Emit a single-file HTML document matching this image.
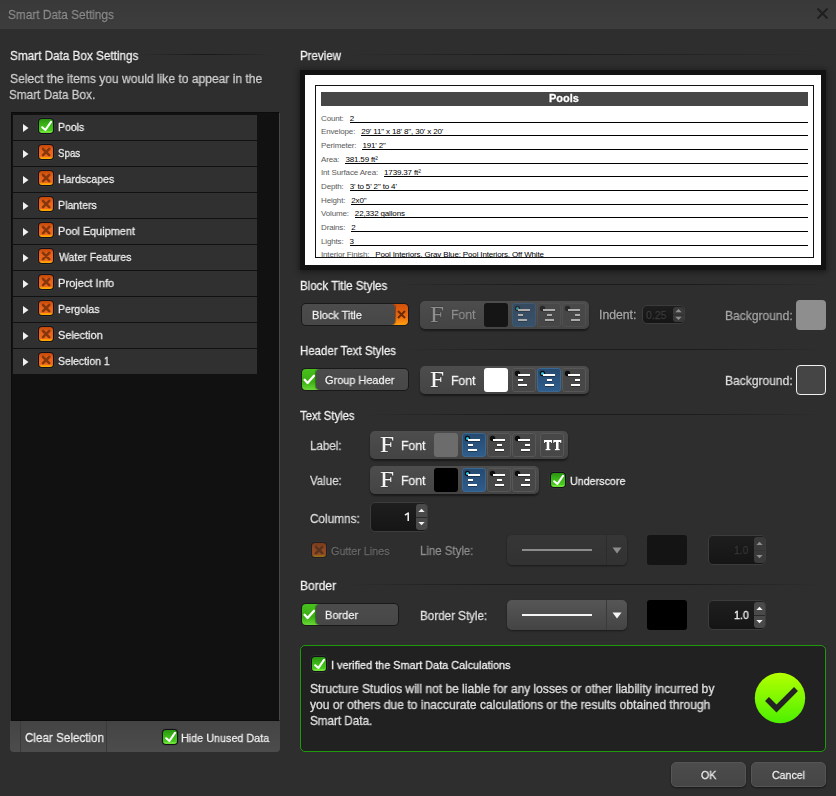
<!DOCTYPE html><html><head><meta charset="utf-8"><style>
html,body{margin:0;padding:0;}
body{width:836px;height:796px;position:relative;overflow:hidden;background:#2e2e2e;font-family:"Liberation Sans",sans-serif;}
.a{position:absolute;box-sizing:border-box;}
.t{position:absolute;white-space:nowrap;line-height:normal;transform-origin:0 0;-webkit-text-stroke:0.3px currentColor;text-shadow:0 0 1.5px rgba(0,0,0,.7);will-change:transform;}
</style></head><body><div class="a" style="left:0px;top:0px;width:836px;height:29px;background:linear-gradient(#393939,#3d3d3d);"></div><div class="t" style="left:8.42px;top:8px;font-size:12.46px;color:#8c8c8c;font-family:'Liberation Sans';font-weight:normal;transform:scaleX(0.9502);">Smart Data Settings</div><svg class="a" style="left:815px;top:6px" width="15" height="15" viewBox="0 0 15 15"><path d="M2.5 2.5 L12.5 12.5 M12.5 2.5 L2.5 12.5" stroke="#1f1f1f" stroke-width="1.9"/></svg><div class="t" style="left:9.54px;top:49px;font-size:12.61px;color:#f2f2f2;font-family:'Liberation Sans';font-weight:normal;transform:scaleX(0.9299);">Smart Data Box Settings</div><div class="a" style="left:141px;top:54px;width:130px;height:1px;background:linear-gradient(90deg,rgba(20,20,20,0),#181818 50%,rgba(20,20,20,0));"></div><div class="t" style="left:9.52px;top:72px;font-size:12.61px;color:#d0d0d0;font-family:'Liberation Sans';font-weight:normal;transform:scaleX(0.957);">Select the items you would like to appear in the</div><div class="t" style="left:9.32px;top:87px;font-size:12.9px;color:#d0d0d0;font-family:'Liberation Sans';font-weight:normal;transform:scaleX(0.9121);">Smart Data Box.</div><div class="a" style="left:11px;top:112px;width:269px;height:609px;background:#111;border:1px solid #0c0c0c;border-right:1px solid #474747;"></div><div class="a" style="left:13px;top:115px;width:244px;height:25px;background:#303030;"></div><svg class="a" style="left:23px;top:124px" width="6" height="8" viewBox="0 0 6 8"><path d="M0 0 L5.5 4 L0 8 Z" fill="#f2f2f2"/></svg><div class="a" style="left:38px;top:118px;width:16px;height:16px;opacity:1;border-radius:4px;background:#141019;box-shadow:0 0 0 1px rgba(60,60,60,.5)"><div class="a" style="left:1px;top:1px;right:1px;bottom:1px;border-radius:3px;background:linear-gradient(#2a9410,#3cb818 45%,#48cc1c 85%,#86f048 92%,#56d424)"></div><svg class="a" style="left:0;top:0" width="16" height="16" viewBox="0 0 16 16"><path d="M4.2 9.3 L7.4 12 L13 3.8" fill="none" stroke="#fff" stroke-width="2.1" stroke-linecap="round" stroke-linejoin="round"/></svg></div><div class="t" style="left:57.8px;top:121px;font-size:11.16px;color:#f0f0f0;font-family:'Liberation Sans';font-weight:normal;transform:scaleX(0.9383);">Pools</div><div class="a" style="left:13px;top:141px;width:244px;height:25px;background:#303030;"></div><svg class="a" style="left:23px;top:150px" width="6" height="8" viewBox="0 0 6 8"><path d="M0 0 L5.5 4 L0 8 Z" fill="#f2f2f2"/></svg><div class="a" style="left:38px;top:144px;width:16px;height:16px;opacity:1;border-radius:4px;background:#141019;box-shadow:0 0 0 1px rgba(60,60,60,.5)"><div class="a" style="left:1px;top:1px;right:1px;bottom:1px;border-radius:3px;background:linear-gradient(#c24806,#e8601a 35%,#f06a1a 84%,#ffb000 92%,#ffa000)"></div><svg class="a" style="left:0;top:0" width="16" height="16" viewBox="0 0 16 16"><path d="M5 5 L11.2 11.2 M11.2 5 L5 11.2" fill="none" stroke="#86380c" stroke-width="2.6" stroke-linecap="round"/></svg></div><div class="t" style="left:58.06px;top:147px;font-size:11.16px;color:#f0f0f0;font-family:'Liberation Sans';font-weight:normal;transform:scaleX(0.8735);">Spas</div><div class="a" style="left:13px;top:167px;width:244px;height:25px;background:#303030;"></div><svg class="a" style="left:23px;top:176px" width="6" height="8" viewBox="0 0 6 8"><path d="M0 0 L5.5 4 L0 8 Z" fill="#f2f2f2"/></svg><div class="a" style="left:38px;top:170px;width:16px;height:16px;opacity:1;border-radius:4px;background:#141019;box-shadow:0 0 0 1px rgba(60,60,60,.5)"><div class="a" style="left:1px;top:1px;right:1px;bottom:1px;border-radius:3px;background:linear-gradient(#c24806,#e8601a 35%,#f06a1a 84%,#ffb000 92%,#ffa000)"></div><svg class="a" style="left:0;top:0" width="16" height="16" viewBox="0 0 16 16"><path d="M5 5 L11.2 11.2 M11.2 5 L5 11.2" fill="none" stroke="#86380c" stroke-width="2.6" stroke-linecap="round"/></svg></div><div class="t" style="left:57.79px;top:173px;font-size:11.16px;color:#f0f0f0;font-family:'Liberation Sans';font-weight:normal;transform:scaleX(0.9436);">Hardscapes</div><div class="a" style="left:13px;top:193px;width:244px;height:25px;background:#303030;"></div><svg class="a" style="left:23px;top:202px" width="6" height="8" viewBox="0 0 6 8"><path d="M0 0 L5.5 4 L0 8 Z" fill="#f2f2f2"/></svg><div class="a" style="left:38px;top:196px;width:16px;height:16px;opacity:1;border-radius:4px;background:#141019;box-shadow:0 0 0 1px rgba(60,60,60,.5)"><div class="a" style="left:1px;top:1px;right:1px;bottom:1px;border-radius:3px;background:linear-gradient(#c24806,#e8601a 35%,#f06a1a 84%,#ffb000 92%,#ffa000)"></div><svg class="a" style="left:0;top:0" width="16" height="16" viewBox="0 0 16 16"><path d="M5 5 L11.2 11.2 M11.2 5 L5 11.2" fill="none" stroke="#86380c" stroke-width="2.6" stroke-linecap="round"/></svg></div><div class="t" style="left:57.79px;top:199px;font-size:11.16px;color:#f0f0f0;font-family:'Liberation Sans';font-weight:normal;transform:scaleX(0.9484);">Planters</div><div class="a" style="left:13px;top:219px;width:244px;height:25px;background:#303030;"></div><svg class="a" style="left:23px;top:228px" width="6" height="8" viewBox="0 0 6 8"><path d="M0 0 L5.5 4 L0 8 Z" fill="#f2f2f2"/></svg><div class="a" style="left:38px;top:222px;width:16px;height:16px;opacity:1;border-radius:4px;background:#141019;box-shadow:0 0 0 1px rgba(60,60,60,.5)"><div class="a" style="left:1px;top:1px;right:1px;bottom:1px;border-radius:3px;background:linear-gradient(#c24806,#e8601a 35%,#f06a1a 84%,#ffb000 92%,#ffa000)"></div><svg class="a" style="left:0;top:0" width="16" height="16" viewBox="0 0 16 16"><path d="M5 5 L11.2 11.2 M11.2 5 L5 11.2" fill="none" stroke="#86380c" stroke-width="2.6" stroke-linecap="round"/></svg></div><div class="t" style="left:57.77px;top:225px;font-size:11.16px;color:#f0f0f0;font-family:'Liberation Sans';font-weight:normal;transform:scaleX(0.9769);">Pool Equipment</div><div class="a" style="left:13px;top:245px;width:244px;height:25px;background:#303030;"></div><svg class="a" style="left:23px;top:254px" width="6" height="8" viewBox="0 0 6 8"><path d="M0 0 L5.5 4 L0 8 Z" fill="#f2f2f2"/></svg><div class="a" style="left:38px;top:248px;width:16px;height:16px;opacity:1;border-radius:4px;background:#141019;box-shadow:0 0 0 1px rgba(60,60,60,.5)"><div class="a" style="left:1px;top:1px;right:1px;bottom:1px;border-radius:3px;background:linear-gradient(#c24806,#e8601a 35%,#f06a1a 84%,#ffb000 92%,#ffa000)"></div><svg class="a" style="left:0;top:0" width="16" height="16" viewBox="0 0 16 16"><path d="M5 5 L11.2 11.2 M11.2 5 L5 11.2" fill="none" stroke="#86380c" stroke-width="2.6" stroke-linecap="round"/></svg></div><div class="t" style="left:58.5px;top:251px;font-size:11.16px;color:#f0f0f0;font-family:'Liberation Sans';font-weight:normal;transform:scaleX(0.9461);">Water Features</div><div class="a" style="left:13px;top:271px;width:244px;height:25px;background:#303030;"></div><svg class="a" style="left:23px;top:280px" width="6" height="8" viewBox="0 0 6 8"><path d="M0 0 L5.5 4 L0 8 Z" fill="#f2f2f2"/></svg><div class="a" style="left:38px;top:274px;width:16px;height:16px;opacity:1;border-radius:4px;background:#141019;box-shadow:0 0 0 1px rgba(60,60,60,.5)"><div class="a" style="left:1px;top:1px;right:1px;bottom:1px;border-radius:3px;background:linear-gradient(#c24806,#e8601a 35%,#f06a1a 84%,#ffb000 92%,#ffa000)"></div><svg class="a" style="left:0;top:0" width="16" height="16" viewBox="0 0 16 16"><path d="M5 5 L11.2 11.2 M11.2 5 L5 11.2" fill="none" stroke="#86380c" stroke-width="2.6" stroke-linecap="round"/></svg></div><div class="t" style="left:57.75px;top:277px;font-size:11.16px;color:#f0f0f0;font-family:'Liberation Sans';font-weight:normal;transform:scaleX(0.9937);">Project Info</div><div class="a" style="left:13px;top:297px;width:244px;height:25px;background:#303030;"></div><svg class="a" style="left:23px;top:306px" width="6" height="8" viewBox="0 0 6 8"><path d="M0 0 L5.5 4 L0 8 Z" fill="#f2f2f2"/></svg><div class="a" style="left:38px;top:300px;width:16px;height:16px;opacity:1;border-radius:4px;background:#141019;box-shadow:0 0 0 1px rgba(60,60,60,.5)"><div class="a" style="left:1px;top:1px;right:1px;bottom:1px;border-radius:3px;background:linear-gradient(#c24806,#e8601a 35%,#f06a1a 84%,#ffb000 92%,#ffa000)"></div><svg class="a" style="left:0;top:0" width="16" height="16" viewBox="0 0 16 16"><path d="M5 5 L11.2 11.2 M11.2 5 L5 11.2" fill="none" stroke="#86380c" stroke-width="2.6" stroke-linecap="round"/></svg></div><div class="t" style="left:57.79px;top:303px;font-size:11.16px;color:#f0f0f0;font-family:'Liberation Sans';font-weight:normal;transform:scaleX(0.9419);">Pergolas</div><div class="a" style="left:13px;top:323px;width:244px;height:25px;background:#303030;"></div><svg class="a" style="left:23px;top:332px" width="6" height="8" viewBox="0 0 6 8"><path d="M0 0 L5.5 4 L0 8 Z" fill="#f2f2f2"/></svg><div class="a" style="left:38px;top:326px;width:16px;height:16px;opacity:1;border-radius:4px;background:#141019;box-shadow:0 0 0 1px rgba(60,60,60,.5)"><div class="a" style="left:1px;top:1px;right:1px;bottom:1px;border-radius:3px;background:linear-gradient(#c24806,#e8601a 35%,#f06a1a 84%,#ffb000 92%,#ffa000)"></div><svg class="a" style="left:0;top:0" width="16" height="16" viewBox="0 0 16 16"><path d="M5 5 L11.2 11.2 M11.2 5 L5 11.2" fill="none" stroke="#86380c" stroke-width="2.6" stroke-linecap="round"/></svg></div><div class="t" style="left:58.01px;top:329px;font-size:11.16px;color:#f0f0f0;font-family:'Liberation Sans';font-weight:normal;transform:scaleX(0.9721);">Selection</div><div class="a" style="left:13px;top:349px;width:244px;height:25px;background:#303030;"></div><svg class="a" style="left:23px;top:358px" width="6" height="8" viewBox="0 0 6 8"><path d="M0 0 L5.5 4 L0 8 Z" fill="#f2f2f2"/></svg><div class="a" style="left:38px;top:352px;width:16px;height:16px;opacity:1;border-radius:4px;background:#141019;box-shadow:0 0 0 1px rgba(60,60,60,.5)"><div class="a" style="left:1px;top:1px;right:1px;bottom:1px;border-radius:3px;background:linear-gradient(#c24806,#e8601a 35%,#f06a1a 84%,#ffb000 92%,#ffa000)"></div><svg class="a" style="left:0;top:0" width="16" height="16" viewBox="0 0 16 16"><path d="M5 5 L11.2 11.2 M11.2 5 L5 11.2" fill="none" stroke="#86380c" stroke-width="2.6" stroke-linecap="round"/></svg></div><div class="t" style="left:58.03px;top:355px;font-size:11.16px;color:#f0f0f0;font-family:'Liberation Sans';font-weight:normal;transform:scaleX(0.9364);">Selection 1</div><div class="a" style="left:10px;top:721px;width:270px;height:31px;background:linear-gradient(#444,#4c4c4c);border-radius:0 0 4px 4px;"></div><div class="a" style="left:20px;top:721px;width:1px;height:31px;background:#3a3a3a;"></div><div class="a" style="left:106px;top:721px;width:1px;height:31px;background:#3a3a3a;"></div><div class="t" style="left:24.73px;top:731px;font-size:12.46px;color:#f0f0f0;font-family:'Liberation Sans';font-weight:normal;transform:scaleX(0.9357);">Clear Selection</div><div class="a" style="left:162px;top:729px;width:16px;height:16px;opacity:1;border-radius:4px;background:#141019;box-shadow:0 0 0 1px rgba(60,60,60,.5)"><div class="a" style="left:1px;top:1px;right:1px;bottom:1px;border-radius:3px;background:linear-gradient(#2a9410,#3cb818 45%,#48cc1c 85%,#86f048 92%,#56d424)"></div><svg class="a" style="left:0;top:0" width="16" height="16" viewBox="0 0 16 16"><path d="M4.2 9.3 L7.4 12 L13 3.8" fill="none" stroke="#fff" stroke-width="2.1" stroke-linecap="round" stroke-linejoin="round"/></svg></div><div class="t" style="left:181.24px;top:732px;font-size:11.23px;color:#f0f0f0;font-family:'Liberation Sans';font-weight:normal;transform:scaleX(0.962);">Hide Unused Data</div><div class="t" style="left:299.85px;top:49px;font-size:12.1px;color:#f2f2f2;font-family:'Liberation Sans';font-weight:normal;transform:scaleX(0.9548);">Preview</div><div class="a" style="left:345px;top:54px;width:480px;height:1px;background:linear-gradient(90deg,rgba(20,20,20,0),#1a1a1a 40%,rgba(20,20,20,0));"></div><div class="a" style="left:300px;top:70px;width:526px;height:200px;background:#121212;box-shadow:0 1px 6px 1px rgba(0,0,0,.45);"></div><div class="a" style="left:305px;top:75px;width:516px;height:190px;background:#fff;"></div><div class="a" style="left:315px;top:85px;width:499px;height:173px;border:1.5px solid #111;"></div><div class="a" style="left:321px;top:92px;width:487px;height:14px;background:#464646;"></div><div class="t" style="left:464px;width:200px;text-align:center;top:91.5px;font-size:11px;line-height:normal;color:#fff;font-weight:bold;">Pools</div><div class="a" style="left:316px;top:107px;width:497px;height:150px;overflow:hidden"><div class="a" style="left:5px;top:6.64px;width:487px;height:12px;display:flex;font-size:8px;line-height:normal;white-space:nowrap"><span style="color:#5a5a5a;letter-spacing:-0.15px;margin-right:6px">Count:</span><span style="color:#000;flex:1;letter-spacing:-0.15px;position:relative">2<i style="position:absolute;left:0;right:0;top:8.36px;height:1px;background:#000"></i></span></div><div class="a" style="left:5px;top:20.31px;width:487px;height:12px;display:flex;font-size:8px;line-height:normal;white-space:nowrap"><span style="color:#5a5a5a;letter-spacing:-0.15px;margin-right:6px">Envelope:</span><span style="color:#000;flex:1;letter-spacing:-0.15px;position:relative">29' 11" x 18' 8", 30' x 20'<i style="position:absolute;left:0;right:0;top:7.69px;height:1px;background:#000"></i></span></div><div class="a" style="left:5px;top:33.98px;width:487px;height:12px;display:flex;font-size:8px;line-height:normal;white-space:nowrap"><span style="color:#5a5a5a;letter-spacing:-0.15px;margin-right:6px">Perimeter:</span><span style="color:#000;flex:1;letter-spacing:-0.15px;position:relative">191' 2"<i style="position:absolute;left:0;right:0;top:8.02px;height:1px;background:#000"></i></span></div><div class="a" style="left:5px;top:47.65px;width:487px;height:12px;display:flex;font-size:8px;line-height:normal;white-space:nowrap"><span style="color:#5a5a5a;letter-spacing:-0.15px;margin-right:6px">Area:</span><span style="color:#000;flex:1;letter-spacing:-0.15px;position:relative">381.59 ft²<i style="position:absolute;left:0;right:0;top:8.35px;height:1px;background:#000"></i></span></div><div class="a" style="left:5px;top:61.32px;width:487px;height:12px;display:flex;font-size:8px;line-height:normal;white-space:nowrap"><span style="color:#5a5a5a;letter-spacing:-0.15px;margin-right:6px">Int Surface Area:</span><span style="color:#000;flex:1;letter-spacing:-0.15px;position:relative">1739.37 ft²<i style="position:absolute;left:0;right:0;top:7.68px;height:1px;background:#000"></i></span></div><div class="a" style="left:5px;top:74.99px;width:487px;height:12px;display:flex;font-size:8px;line-height:normal;white-space:nowrap"><span style="color:#5a5a5a;letter-spacing:-0.15px;margin-right:6px">Depth:</span><span style="color:#000;flex:1;letter-spacing:-0.15px;position:relative">3' to 5' 2" to 4'<i style="position:absolute;left:0;right:0;top:8.01px;height:1px;background:#000"></i></span></div><div class="a" style="left:5px;top:88.66px;width:487px;height:12px;display:flex;font-size:8px;line-height:normal;white-space:nowrap"><span style="color:#5a5a5a;letter-spacing:-0.15px;margin-right:6px">Height:</span><span style="color:#000;flex:1;letter-spacing:-0.15px;position:relative">2x0"<i style="position:absolute;left:0;right:0;top:8.34px;height:1px;background:#000"></i></span></div><div class="a" style="left:5px;top:102.33px;width:487px;height:12px;display:flex;font-size:8px;line-height:normal;white-space:nowrap"><span style="color:#5a5a5a;letter-spacing:-0.15px;margin-right:6px">Volume:</span><span style="color:#000;flex:1;letter-spacing:-0.15px;position:relative">22,332 gallons<i style="position:absolute;left:0;right:0;top:7.67px;height:1px;background:#000"></i></span></div><div class="a" style="left:5px;top:116.00px;width:487px;height:12px;display:flex;font-size:8px;line-height:normal;white-space:nowrap"><span style="color:#5a5a5a;letter-spacing:-0.15px;margin-right:6px">Drains:</span><span style="color:#000;flex:1;letter-spacing:-0.15px;position:relative">2<i style="position:absolute;left:0;right:0;top:8.00px;height:1px;background:#000"></i></span></div><div class="a" style="left:5px;top:129.67px;width:487px;height:12px;display:flex;font-size:8px;line-height:normal;white-space:nowrap"><span style="color:#5a5a5a;letter-spacing:-0.15px;margin-right:6px">Lights:</span><span style="color:#000;flex:1;letter-spacing:-0.15px;position:relative">3<i style="position:absolute;left:0;right:0;top:8.33px;height:1px;background:#000"></i></span></div><div class="a" style="left:5px;top:143.34px;width:487px;height:12px;display:flex;font-size:8px;line-height:normal;white-space:nowrap"><span style="color:#5a5a5a;letter-spacing:-0.15px;margin-right:6px">Interior Finish:</span><span style="color:#000;flex:1;letter-spacing:-0.15px;position:relative">Pool Interiors, Gray Blue; Pool Interiors, Off White<i style="position:absolute;left:0;right:0;top:7.66px;height:1px;background:#000"></i></span></div></div><div class="t" style="left:300.04px;top:279px;font-size:12.03px;color:#f2f2f2;font-family:'Liberation Sans';font-weight:normal;transform:scaleX(0.9609);">Block Title Styles</div><div class="a" style="left:395px;top:284px;width:431px;height:1px;background:linear-gradient(90deg,rgba(24,24,24,0),#1c1c1c 30%,#1c1c1c 70%,rgba(24,24,24,0));"></div><div class="t" style="left:300.05px;top:344px;font-size:12.03px;color:#f2f2f2;font-family:'Liberation Sans';font-weight:normal;transform:scaleX(0.9542);">Header Text Styles</div><div class="a" style="left:402px;top:349px;width:424px;height:1px;background:linear-gradient(90deg,rgba(24,24,24,0),#1c1c1c 30%,#1c1c1c 70%,rgba(24,24,24,0));"></div><div class="t" style="left:300.07px;top:409px;font-size:12.25px;color:#f2f2f2;font-family:'Liberation Sans';font-weight:normal;transform:scaleX(0.9214);">Text Styles</div><div class="a" style="left:360px;top:414px;width:466px;height:1px;background:linear-gradient(90deg,rgba(24,24,24,0),#1c1c1c 30%,#1c1c1c 70%,rgba(24,24,24,0));"></div><div class="t" style="left:299.94px;top:579px;font-size:12.49px;color:#f2f2f2;font-family:'Liberation Sans';font-weight:normal;transform:scaleX(0.9628);">Border</div><div class="a" style="left:345px;top:584px;width:481px;height:1px;background:linear-gradient(90deg,rgba(24,24,24,0),#1c1c1c 30%,#1c1c1c 70%,rgba(24,24,24,0));"></div><div class="a" style="left:301px;top:303px;width:108px;height:23px;border-radius:5px;background:#1a1a1a;"></div><div class="a" style="left:388px;top:304px;width:20px;height:21px;border-radius:0 4px 4px 0;background:linear-gradient(#cf520c,#ee6a10 60%,#ffa010);"></div><svg class="a" style="left:397px;top:310px" width="9" height="9" viewBox="0 0 9 9"><path d="M1 1 L8 8 M8 1 L1 8" stroke="#6a2c08" stroke-width="2"/></svg><div class="a" style="left:302px;top:304px;width:93px;height:21px;border-radius:4px;background:linear-gradient(#4c4c4c,#474747);box-shadow:1px 0 1px rgba(0,0,0,.35);"></div><div class="t" style="left:311.69px;top:309px;font-size:11.2px;color:#f2f2f2;font-family:'Liberation Sans';font-weight:normal;transform:scaleX(0.9784);">Block Title</div><div class="a" style="left:420px;top:301px;width:169px;height:28px;border-radius:5px;background:linear-gradient(#4d4d4d,#444);box-shadow:0 2px 2px rgba(0,0,0,.45);"></div><div class="t" style="left:430.21px;top:301px;font-size:23.82px;color:#8e8e8e;font-family:'Liberation Serif';font-weight:normal;transform:scaleX(1.0553);-webkit-text-stroke:0.1px currentColor;">F</div><div class="t" style="left:450.74px;top:307px;font-size:12.75px;color:#8e8e8e;font-family:'Liberation Sans';font-weight:normal;transform:scaleX(0.9551);">Font</div><div class="a" style="left:484px;top:303px;width:24px;height:24px;border-radius:3px;background:#151515;"></div><div class="a" style="left:0;top:0;width:836px;height:796px;opacity:.55;"><div class="a" style="left:512px;top:303px;width:24px;height:24px;border-radius:3px;background:linear-gradient(#254a70,#2f5d8c);border:1px solid #3a6894;"></div><div class="a" style="left:515.5px;top:306.5px;width:3px;height:3px;border-radius:50%;background:#22c8e8;box-shadow:0 0 0 1.2px #0c0c0c;"></div><div class="a" style="left:518px;top:309px;width:12px;height:2px;background:#ffffff;box-shadow:0 1px 0 rgba(0,0,0,.35);"></div><div class="a" style="left:518px;top:314px;width:5px;height:2px;background:#ffffff;box-shadow:0 1px 0 rgba(0,0,0,.35);"></div><div class="a" style="left:518px;top:319px;width:9px;height:2px;background:#ffffff;box-shadow:0 1px 0 rgba(0,0,0,.35);"></div><div class="a" style="left:537px;top:303px;width:24px;height:24px;border-radius:3px;background:#474747;border:1px solid #585858;"></div><div class="a" style="left:540.5px;top:306.5px;width:3px;height:3px;border-radius:50%;background:#101010;box-shadow:0 0 0 1.2px #0c0c0c;"></div><div class="a" style="left:543px;top:309px;width:12px;height:2px;background:#ffffff;box-shadow:0 1px 0 rgba(0,0,0,.35);"></div><div class="a" style="left:547px;top:314px;width:5px;height:2px;background:#ffffff;box-shadow:0 1px 0 rgba(0,0,0,.35);"></div><div class="a" style="left:545px;top:319px;width:9px;height:2px;background:#ffffff;box-shadow:0 1px 0 rgba(0,0,0,.35);"></div><div class="a" style="left:562px;top:303px;width:24px;height:24px;border-radius:3px;background:#474747;border:1px solid #585858;"></div><div class="a" style="left:565.5px;top:306.5px;width:3px;height:3px;border-radius:50%;background:#101010;box-shadow:0 0 0 1.2px #0c0c0c;"></div><div class="a" style="left:568px;top:309px;width:12px;height:2px;background:#ffffff;box-shadow:0 1px 0 rgba(0,0,0,.35);"></div><div class="a" style="left:575px;top:314px;width:5px;height:2px;background:#ffffff;box-shadow:0 1px 0 rgba(0,0,0,.35);"></div><div class="a" style="left:571px;top:319px;width:9px;height:2px;background:#ffffff;box-shadow:0 1px 0 rgba(0,0,0,.35);"></div></div><div class="t" style="left:598.79px;top:308px;font-size:12.17px;color:#a6a6a6;font-family:'Liberation Sans';font-weight:normal;transform:scaleX(1.0057);">Indent:</div><div class="a" style="left:642px;top:305px;width:43px;height:19px;border-radius:5px;background:linear-gradient(#1e1e1e,#151515);border:1px solid #3c3c3c;"></div><div class="a" style="left:673px;top:307px;width:11px;height:15px;border-radius:3px;background:#3a3a3a;"></div><div class="a" style="left:673px;top:314.0px;width:11px;height:1.5px;background:#343434;"></div><svg class="a" style="left:673px;top:305px" width="11" height="19" viewBox="0 0 11 19"><path d="M2.3 7.35 L5.5 3.95 L8.7 7.35 Z" fill="#8e8e8e"/><path d="M2.3 11.65 L5.5 15.05 L8.7 11.65 Z" fill="#8e8e8e"/></svg><div class="t" style="left:646.21px;top:309px;font-size:10.72px;color:#3c3c3c;font-family:'Liberation Sans';font-weight:normal;transform:scaleX(0.975);">0.25</div><div class="t" style="left:724.77px;top:309px;font-size:12.46px;color:#a6a6a6;font-family:'Liberation Sans';font-weight:normal;transform:scaleX(0.9677);">Background:</div><div class="a" style="left:796px;top:300px;width:30px;height:30px;border-radius:4px;background:#8e8e8e;"></div><div class="a" style="left:301px;top:368px;width:108px;height:23px;border-radius:5px;background:#1a1a1a;"></div><div class="a" style="left:302px;top:369px;width:20px;height:21px;border-radius:4px 0 0 4px;background:linear-gradient(#49c01f,#3aae12 60%,#6ad838);"></div><svg class="a" style="left:303px;top:374px" width="13" height="11" viewBox="0 0 13 11"><path d="M1.6 5.8 L4.6 9 L11 1.8" fill="none" stroke="#fff" stroke-width="2.3" stroke-linecap="round" stroke-linejoin="round"/></svg><div class="a" style="left:316px;top:369px;width:92px;height:21px;border-radius:4px;background:linear-gradient(#4c4c4c,#474747);box-shadow:-1px 0 1px rgba(0,0,0,.35);"></div><div class="t" style="left:324.51px;top:374px;font-size:11.16px;color:#f2f2f2;font-family:'Liberation Sans';font-weight:normal;transform:scaleX(0.9814);">Group Header</div><div class="a" style="left:420px;top:366px;width:169px;height:28px;border-radius:5px;background:linear-gradient(#4d4d4d,#444);box-shadow:0 2px 2px rgba(0,0,0,.45);"></div><div class="t" style="left:430.21px;top:366px;font-size:23.82px;color:#f4f4f4;font-family:'Liberation Serif';font-weight:normal;transform:scaleX(1.0553);-webkit-text-stroke:0.1px currentColor;">F</div><div class="t" style="left:450.74px;top:373px;font-size:12.75px;color:#f4f4f4;font-family:'Liberation Sans';font-weight:normal;transform:scaleX(0.9551);">Font</div><div class="a" style="left:484px;top:368px;width:24px;height:24px;border-radius:3px;background:#ffffff;"></div><div class="a" style="left:0;top:0;width:836px;height:796px;"><div class="a" style="left:512px;top:368px;width:24px;height:24px;border-radius:3px;background:#474747;border:1px solid #585858;"></div><div class="a" style="left:515.5px;top:371.5px;width:3px;height:3px;border-radius:50%;background:#101010;box-shadow:0 0 0 1.2px #0c0c0c;"></div><div class="a" style="left:518px;top:374px;width:12px;height:2px;background:#ffffff;box-shadow:0 1px 0 rgba(0,0,0,.35);"></div><div class="a" style="left:518px;top:379px;width:5px;height:2px;background:#ffffff;box-shadow:0 1px 0 rgba(0,0,0,.35);"></div><div class="a" style="left:518px;top:384px;width:9px;height:2px;background:#ffffff;box-shadow:0 1px 0 rgba(0,0,0,.35);"></div><div class="a" style="left:537px;top:368px;width:24px;height:24px;border-radius:3px;background:linear-gradient(#254a70,#2f5d8c);border:1px solid #3a6894;"></div><div class="a" style="left:540.5px;top:371.5px;width:3px;height:3px;border-radius:50%;background:#22c8e8;box-shadow:0 0 0 1.2px #0c0c0c;"></div><div class="a" style="left:543px;top:374px;width:12px;height:2px;background:#ffffff;box-shadow:0 1px 0 rgba(0,0,0,.35);"></div><div class="a" style="left:547px;top:379px;width:5px;height:2px;background:#ffffff;box-shadow:0 1px 0 rgba(0,0,0,.35);"></div><div class="a" style="left:545px;top:384px;width:9px;height:2px;background:#ffffff;box-shadow:0 1px 0 rgba(0,0,0,.35);"></div><div class="a" style="left:562px;top:368px;width:24px;height:24px;border-radius:3px;background:#474747;border:1px solid #585858;"></div><div class="a" style="left:565.5px;top:371.5px;width:3px;height:3px;border-radius:50%;background:#101010;box-shadow:0 0 0 1.2px #0c0c0c;"></div><div class="a" style="left:568px;top:374px;width:12px;height:2px;background:#ffffff;box-shadow:0 1px 0 rgba(0,0,0,.35);"></div><div class="a" style="left:575px;top:379px;width:5px;height:2px;background:#ffffff;box-shadow:0 1px 0 rgba(0,0,0,.35);"></div><div class="a" style="left:571px;top:384px;width:9px;height:2px;background:#ffffff;box-shadow:0 1px 0 rgba(0,0,0,.35);"></div></div><div class="t" style="left:724.77px;top:374px;font-size:12.46px;color:#dedede;font-family:'Liberation Sans';font-weight:normal;transform:scaleX(0.9677);">Background:</div><div class="a" style="left:796px;top:365px;width:30px;height:30px;border-radius:4px;background:#454545;border:1px solid #f0f0f0;"></div><div class="t" style="left:309.73px;top:439px;font-size:12.61px;color:#dcdcdc;font-family:'Liberation Sans';font-weight:normal;transform:scaleX(0.9194);">Label:</div><div class="a" style="left:370px;top:431px;width:198px;height:28px;border-radius:5px;background:linear-gradient(#4d4d4d,#444);box-shadow:0 2px 2px rgba(0,0,0,.45);"></div><div class="t" style="left:380.21px;top:431px;font-size:23.82px;color:#f4f4f4;font-family:'Liberation Serif';font-weight:normal;transform:scaleX(1.0553);-webkit-text-stroke:0.1px currentColor;">F</div><div class="t" style="left:400.74px;top:438px;font-size:12.75px;color:#f4f4f4;font-family:'Liberation Sans';font-weight:normal;transform:scaleX(0.9551);">Font</div><div class="a" style="left:434px;top:433px;width:24px;height:24px;border-radius:3px;background:#6c6c6c;"></div><div class="a" style="left:0;top:0;width:836px;height:796px;"><div class="a" style="left:462px;top:433px;width:24px;height:24px;border-radius:3px;background:linear-gradient(#254a70,#2f5d8c);border:1px solid #3a6894;"></div><div class="a" style="left:465.5px;top:436.5px;width:3px;height:3px;border-radius:50%;background:#22c8e8;box-shadow:0 0 0 1.2px #0c0c0c;"></div><div class="a" style="left:468px;top:439px;width:12px;height:2px;background:#ffffff;box-shadow:0 1px 0 rgba(0,0,0,.35);"></div><div class="a" style="left:468px;top:444px;width:5px;height:2px;background:#ffffff;box-shadow:0 1px 0 rgba(0,0,0,.35);"></div><div class="a" style="left:468px;top:449px;width:9px;height:2px;background:#ffffff;box-shadow:0 1px 0 rgba(0,0,0,.35);"></div><div class="a" style="left:487px;top:433px;width:24px;height:24px;border-radius:3px;background:#474747;border:1px solid #585858;"></div><div class="a" style="left:490.5px;top:436.5px;width:3px;height:3px;border-radius:50%;background:#101010;box-shadow:0 0 0 1.2px #0c0c0c;"></div><div class="a" style="left:493px;top:439px;width:12px;height:2px;background:#ffffff;box-shadow:0 1px 0 rgba(0,0,0,.35);"></div><div class="a" style="left:497px;top:444px;width:5px;height:2px;background:#ffffff;box-shadow:0 1px 0 rgba(0,0,0,.35);"></div><div class="a" style="left:495px;top:449px;width:9px;height:2px;background:#ffffff;box-shadow:0 1px 0 rgba(0,0,0,.35);"></div><div class="a" style="left:512px;top:433px;width:24px;height:24px;border-radius:3px;background:#474747;border:1px solid #585858;"></div><div class="a" style="left:515.5px;top:436.5px;width:3px;height:3px;border-radius:50%;background:#101010;box-shadow:0 0 0 1.2px #0c0c0c;"></div><div class="a" style="left:518px;top:439px;width:12px;height:2px;background:#ffffff;box-shadow:0 1px 0 rgba(0,0,0,.35);"></div><div class="a" style="left:525px;top:444px;width:5px;height:2px;background:#ffffff;box-shadow:0 1px 0 rgba(0,0,0,.35);"></div><div class="a" style="left:521px;top:449px;width:9px;height:2px;background:#ffffff;box-shadow:0 1px 0 rgba(0,0,0,.35);"></div></div><div class="a" style="left:540px;top:433px;width:24px;height:24px;border-radius:3px;background:#474747;border:1px solid #585858;"></div><svg class="a" style="left:543.5px;top:439.5px" width="20" height="12" viewBox="0 0 20 12"><g fill="#000" opacity=".35" transform="translate(0.3,0.6)"><path d="M0 0 H8 V3 H7.3 L6.7 2 H5.3 V9.1 H6.4 V10.2 H1.6 V9.1 H2.7 V2 H1.3 L0.7 3 H0 Z"/><path transform="translate(9.3,0)" d="M0 0 H8 V3 H7.3 L6.7 2 H5.3 V9.1 H6.4 V10.2 H1.6 V9.1 H2.7 V2 H1.3 L0.7 3 H0 Z"/></g><g fill="#fff"><path d="M0 0 H8 V3 H7.3 L6.7 2 H5.3 V9.1 H6.4 V10.2 H1.6 V9.1 H2.7 V2 H1.3 L0.7 3 H0 Z"/><path transform="translate(9.3,0)" d="M0 0 H8 V3 H7.3 L6.7 2 H5.3 V9.1 H6.4 V10.2 H1.6 V9.1 H2.7 V2 H1.3 L0.7 3 H0 Z"/></g></svg><div class="t" style="left:310.4px;top:474px;font-size:12.03px;color:#dcdcdc;font-family:'Liberation Sans';font-weight:normal;transform:scaleX(0.955);">Value:</div><div class="a" style="left:370px;top:466px;width:169px;height:28px;border-radius:5px;background:linear-gradient(#4d4d4d,#444);box-shadow:0 2px 2px rgba(0,0,0,.45);"></div><div class="t" style="left:380.21px;top:466px;font-size:23.82px;color:#f4f4f4;font-family:'Liberation Serif';font-weight:normal;transform:scaleX(1.0553);-webkit-text-stroke:0.1px currentColor;">F</div><div class="t" style="left:400.74px;top:473px;font-size:12.75px;color:#f4f4f4;font-family:'Liberation Sans';font-weight:normal;transform:scaleX(0.9551);">Font</div><div class="a" style="left:434px;top:468px;width:24px;height:24px;border-radius:3px;background:#000000;"></div><div class="a" style="left:0;top:0;width:836px;height:796px;"><div class="a" style="left:462px;top:468px;width:24px;height:24px;border-radius:3px;background:linear-gradient(#254a70,#2f5d8c);border:1px solid #3a6894;"></div><div class="a" style="left:465.5px;top:471.5px;width:3px;height:3px;border-radius:50%;background:#22c8e8;box-shadow:0 0 0 1.2px #0c0c0c;"></div><div class="a" style="left:468px;top:474px;width:12px;height:2px;background:#ffffff;box-shadow:0 1px 0 rgba(0,0,0,.35);"></div><div class="a" style="left:468px;top:479px;width:5px;height:2px;background:#ffffff;box-shadow:0 1px 0 rgba(0,0,0,.35);"></div><div class="a" style="left:468px;top:484px;width:9px;height:2px;background:#ffffff;box-shadow:0 1px 0 rgba(0,0,0,.35);"></div><div class="a" style="left:487px;top:468px;width:24px;height:24px;border-radius:3px;background:#474747;border:1px solid #585858;"></div><div class="a" style="left:490.5px;top:471.5px;width:3px;height:3px;border-radius:50%;background:#101010;box-shadow:0 0 0 1.2px #0c0c0c;"></div><div class="a" style="left:493px;top:474px;width:12px;height:2px;background:#ffffff;box-shadow:0 1px 0 rgba(0,0,0,.35);"></div><div class="a" style="left:497px;top:479px;width:5px;height:2px;background:#ffffff;box-shadow:0 1px 0 rgba(0,0,0,.35);"></div><div class="a" style="left:495px;top:484px;width:9px;height:2px;background:#ffffff;box-shadow:0 1px 0 rgba(0,0,0,.35);"></div><div class="a" style="left:512px;top:468px;width:24px;height:24px;border-radius:3px;background:#474747;border:1px solid #585858;"></div><div class="a" style="left:515.5px;top:471.5px;width:3px;height:3px;border-radius:50%;background:#101010;box-shadow:0 0 0 1.2px #0c0c0c;"></div><div class="a" style="left:518px;top:474px;width:12px;height:2px;background:#ffffff;box-shadow:0 1px 0 rgba(0,0,0,.35);"></div><div class="a" style="left:525px;top:479px;width:5px;height:2px;background:#ffffff;box-shadow:0 1px 0 rgba(0,0,0,.35);"></div><div class="a" style="left:521px;top:484px;width:9px;height:2px;background:#ffffff;box-shadow:0 1px 0 rgba(0,0,0,.35);"></div></div><div class="a" style="left:550px;top:472px;width:16px;height:16px;opacity:1;border-radius:4px;background:#141019;box-shadow:0 0 0 1px rgba(60,60,60,.5)"><div class="a" style="left:1px;top:1px;right:1px;bottom:1px;border-radius:3px;background:linear-gradient(#2a9410,#3cb818 45%,#48cc1c 85%,#86f048 92%,#56d424)"></div><svg class="a" style="left:0;top:0" width="16" height="16" viewBox="0 0 16 16"><path d="M4.2 9.3 L7.4 12 L13 3.8" fill="none" stroke="#fff" stroke-width="2.1" stroke-linecap="round" stroke-linejoin="round"/></svg></div><div class="t" style="left:570.09px;top:475px;font-size:11.38px;color:#f2f2f2;font-family:'Liberation Sans';font-weight:normal;transform:scaleX(0.942);">Underscore</div><div class="t" style="left:309.63px;top:512px;font-size:12.61px;color:#dcdcdc;font-family:'Liberation Sans';font-weight:normal;transform:scaleX(0.9333);">Columns:</div><div class="a" style="left:370px;top:502px;width:58px;height:30px;border-radius:5px;background:linear-gradient(#1e1e1e,#151515);border:1px solid #3c3c3c;"></div><div class="a" style="left:416px;top:504px;width:11px;height:26px;border-radius:3px;background:#4a4a4a;"></div><div class="a" style="left:416px;top:516.5px;width:11px;height:1.5px;background:#2a2a2a;"></div><svg class="a" style="left:416px;top:502px" width="11" height="30" viewBox="0 0 11 30"><path d="M2.3 10.1 L5.5 6.7 L8.7 10.1 Z" fill="#f0f0f0"/><path d="M2.3 19.9 L5.5 23.3 L8.7 19.9 Z" fill="#f0f0f0"/></svg><svg class="a" style="left:403px;top:511px" width="8" height="12" viewBox="0 0 8 12"><path d="M2 4.2 L5.2 2 L5.2 10" fill="none" stroke="#f4f4f4" stroke-width="1.5" stroke-linejoin="round"/></svg><div class="a" style="left:311px;top:542px;width:16px;height:16px;opacity:0.5;border-radius:4px;background:#141019;box-shadow:0 0 0 1px rgba(60,60,60,.5)"><div class="a" style="left:1px;top:1px;right:1px;bottom:1px;border-radius:3px;background:linear-gradient(#c24806,#e8601a 35%,#f06a1a 84%,#ffb000 92%,#ffa000)"></div><svg class="a" style="left:0;top:0" width="16" height="16" viewBox="0 0 16 16"><path d="M5 5 L11.2 11.2 M11.2 5 L5 11.2" fill="none" stroke="#86380c" stroke-width="2.6" stroke-linecap="round"/></svg></div><div class="t" style="left:330.72px;top:545px;font-size:11.16px;color:#6a6a6a;font-family:'Liberation Sans';font-weight:normal;transform:scaleX(0.9633);">Gutter Lines</div><div class="t" style="left:420.05px;top:544px;font-size:12.03px;color:#8e8e8e;font-family:'Liberation Sans';font-weight:normal;transform:scaleX(0.9519);">Line Style:</div><div class="a" style="left:507px;top:535px;width:120px;height:30px;border-radius:5px;background:linear-gradient(#363636,#323232);box-shadow:0 1px 2px rgba(0,0,0,.45);"></div><div class="a" style="left:606px;top:535px;width:1px;height:30px;background:#2c2c2c;"></div><div class="a" style="left:522px;top:549px;width:70px;height:2px;background:#8c8c8c;"></div><svg class="a" style="left:611px;top:545px" width="12" height="10" viewBox="0 0 12 10"><path d="M1.5 2.5 L10.5 2.5 L6 8.5 Z" fill="#8c8c8c"/></svg><div class="a" style="left:647px;top:535px;width:40px;height:30px;border-radius:3px;background:#141414;"></div><div class="a" style="left:708px;top:535px;width:58px;height:30px;border-radius:5px;background:linear-gradient(#1e1e1e,#151515);border:1px solid #3c3c3c;"></div><div class="a" style="left:754px;top:537px;width:11px;height:26px;border-radius:3px;background:#3a3a3a;"></div><div class="a" style="left:754px;top:549.5px;width:11px;height:1.5px;background:#343434;"></div><svg class="a" style="left:754px;top:535px" width="11" height="30" viewBox="0 0 11 30"><path d="M2.3 10.1 L5.5 6.7 L8.7 10.1 Z" fill="#8e8e8e"/><path d="M2.3 19.9 L5.5 23.3 L8.7 19.9 Z" fill="#8e8e8e"/></svg><div class="t" style="left:734.09px;top:544px;font-size:11.01px;color:#383838;font-family:'Liberation Sans';font-weight:normal;transform:scaleX(0.9404);">1.0</div><div class="a" style="left:301px;top:603px;width:98px;height:23px;border-radius:5px;background:#1a1a1a;"></div><div class="a" style="left:302px;top:604px;width:20px;height:21px;border-radius:4px 0 0 4px;background:linear-gradient(#49c01f,#3aae12 60%,#6ad838);"></div><svg class="a" style="left:303px;top:609px" width="13" height="11" viewBox="0 0 13 11"><path d="M1.6 5.8 L4.6 9 L11 1.8" fill="none" stroke="#fff" stroke-width="2.3" stroke-linecap="round" stroke-linejoin="round"/></svg><div class="a" style="left:316px;top:604px;width:82px;height:21px;border-radius:4px;background:linear-gradient(#4c4c4c,#474747);box-shadow:-1px 0 1px rgba(0,0,0,.35);"></div><div class="t" style="left:324.74px;top:609px;font-size:11.45px;color:#f2f2f2;font-family:'Liberation Sans';font-weight:normal;transform:scaleX(0.9624);">Border</div><div class="t" style="left:419.97px;top:609px;font-size:12.46px;color:#e0e0e0;font-family:'Liberation Sans';font-weight:normal;transform:scaleX(0.9343);">Border Style:</div><div class="a" style="left:507px;top:600px;width:120px;height:30px;border-radius:5px;background:linear-gradient(#565656,#444);box-shadow:0 1px 2px rgba(0,0,0,.45);"></div><div class="a" style="left:606px;top:600px;width:1px;height:30px;background:#3a3a3a;"></div><div class="a" style="left:522px;top:614px;width:70px;height:2px;background:#f4f4f4;"></div><svg class="a" style="left:611px;top:610px" width="12" height="10" viewBox="0 0 12 10"><path d="M1.5 2.5 L10.5 2.5 L6 8.5 Z" fill="#f4f4f4"/></svg><div class="a" style="left:647px;top:600px;width:40px;height:30px;border-radius:3px;background:#000;"></div><div class="a" style="left:708px;top:600px;width:58px;height:30px;border-radius:5px;background:linear-gradient(#1e1e1e,#151515);border:1px solid #3c3c3c;"></div><div class="a" style="left:754px;top:602px;width:11px;height:26px;border-radius:3px;background:#4a4a4a;"></div><div class="a" style="left:754px;top:614.5px;width:11px;height:1.5px;background:#2a2a2a;"></div><svg class="a" style="left:754px;top:600px" width="11" height="30" viewBox="0 0 11 30"><path d="M2.3 10.1 L5.5 6.7 L8.7 10.1 Z" fill="#f0f0f0"/><path d="M2.3 19.9 L5.5 23.3 L8.7 19.9 Z" fill="#f0f0f0"/></svg><div class="t" style="left:733.67px;top:609px;font-size:11.01px;color:#f6f6f6;font-family:'Liberation Sans';font-weight:normal;transform:scaleX(0.9684);">1.0</div><div class="a" style="left:300px;top:645px;width:526px;height:107px;border-radius:5px;background:#212121;border:1px solid #1f9a0c;"></div><div class="a" style="left:311px;top:656px;width:16px;height:16px;opacity:1;border-radius:4px;background:#141019;box-shadow:0 0 0 1px rgba(60,60,60,.5)"><div class="a" style="left:1px;top:1px;right:1px;bottom:1px;border-radius:3px;background:linear-gradient(#2a9410,#3cb818 45%,#48cc1c 85%,#86f048 92%,#56d424)"></div><svg class="a" style="left:0;top:0" width="16" height="16" viewBox="0 0 16 16"><path d="M4.2 9.3 L7.4 12 L13 3.8" fill="none" stroke="#fff" stroke-width="2.1" stroke-linecap="round" stroke-linejoin="round"/></svg></div><div class="t" style="left:330.64px;top:659px;font-size:11.38px;color:#f2f2f2;font-family:'Liberation Sans';font-weight:normal;transform:scaleX(0.956);">I verified the Smart Data Calculations</div><div class="t" style="left:309.77px;top:682px;font-size:12.17px;color:#e0e0e0;font-family:'Liberation Sans';font-weight:normal;transform:scaleX(0.9874);">Structure Studios will not be liable for any losses or other liability incurred by</div><div class="t" style="left:310.26px;top:698px;font-size:12.17px;color:#e0e0e0;font-family:'Liberation Sans';font-weight:normal;transform:scaleX(0.9939);">you or others due to inaccurate calculations or the results obtained through</div><div class="t" style="left:309.78px;top:714px;font-size:12.17px;color:#e0e0e0;font-family:'Liberation Sans';font-weight:normal;transform:scaleX(0.9603);">Smart Data.</div><svg class="a" style="left:754px;top:672px" width="52" height="52" viewBox="0 0 52 52"><defs><linearGradient id="gg" x1="0" y1="0" x2="0" y2="1"><stop offset="0" stop-color="#b4ff00"/><stop offset="1" stop-color="#4cf000"/></linearGradient></defs><circle cx="26" cy="26" r="25.2" fill="url(#gg)"/><path d="M13 27 L22.5 36.5 L42 17" fill="none" stroke="#232323" stroke-width="5.5"/></svg><div class="a" style="left:671px;top:762px;width:75px;height:25px;border-radius:5px;background:linear-gradient(#4c4c4c,#454545);border:1px solid #555;box-shadow:0 1px 2px rgba(0,0,0,.5);"></div><div class="t" style="left:700.83px;top:769px;font-size:11.16px;color:#f2f2f2;font-family:'Liberation Sans';font-weight:normal;transform:scaleX(0.9484);">OK</div><div class="a" style="left:751px;top:762px;width:75px;height:25px;border-radius:5px;background:linear-gradient(#4c4c4c,#454545);border:1px solid #555;box-shadow:0 1px 2px rgba(0,0,0,.5);"></div><div class="t" style="left:772.03px;top:769px;font-size:11.16px;color:#f2f2f2;font-family:'Liberation Sans';font-weight:normal;transform:scaleX(0.9493);">Cancel</div></body></html>
